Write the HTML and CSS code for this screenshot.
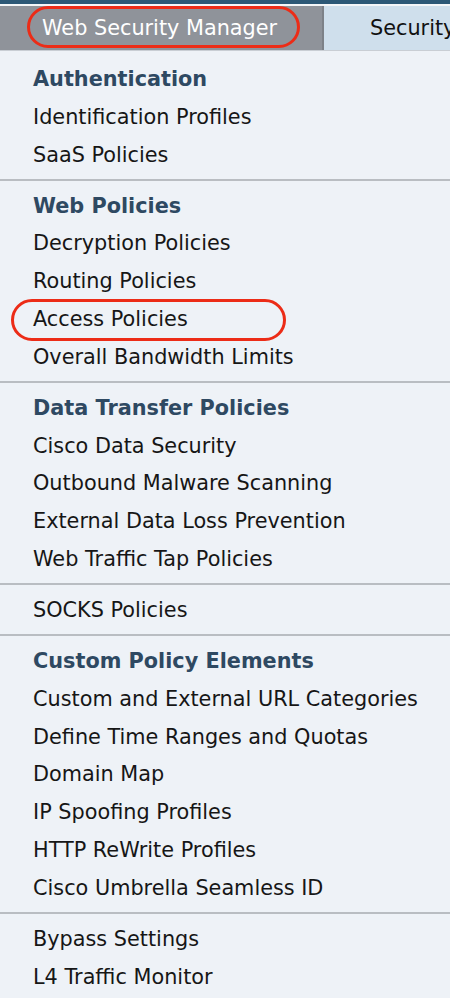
FILE: index.html
```html
<!DOCTYPE html>
<html>
<head>
<meta charset="utf-8">
<link rel="stylesheet" href="styles.css">
</head>
<body>
<div class="page">
  <div class="topstrip"></div>
  <div class="tabs">
    <div class="tab tab-active"><span class="tab-label">Web Security Manager</span><span class="ring ring-tab"></span></div>
    <div class="tab tab-next"><span class="tab-label">Security Services</span></div>
  </div>
  <div class="menu">
    <div class="section">
      <div class="heading">Authentication</div>
      <div class="item">Identification Profiles</div>
      <div class="item">SaaS Policies</div>
    </div>
    <div class="section">
      <div class="heading">Web Policies</div>
      <div class="item">Decryption Policies</div>
      <div class="item">Routing Policies</div>
      <div class="item marked">Access Policies<span class="ring ring-item"></span></div>
      <div class="item">Overall Bandwidth Limits</div>
    </div>
    <div class="section">
      <div class="heading">Data Transfer Policies</div>
      <div class="item">Cisco Data Security</div>
      <div class="item">Outbound Malware Scanning</div>
      <div class="item">External Data Loss Prevention</div>
      <div class="item">Web Traffic Tap Policies</div>
    </div>
    <div class="section">
      <div class="item">SOCKS Policies</div>
    </div>
    <div class="section">
      <div class="heading">Custom Policy Elements</div>
      <div class="item">Custom and External URL Categories</div>
      <div class="item">Define Time Ranges and Quotas</div>
      <div class="item">Domain Map</div>
      <div class="item">IP Spoofing Profiles</div>
      <div class="item">HTTP ReWrite Profiles</div>
      <div class="item">Cisco Umbrella Seamless ID</div>
    </div>
    <div class="section">
      <div class="item">Bypass Settings</div>
      <div class="item">L4 Traffic Monitor</div>
    </div>
  </div>
</div>
</body>
</html>
```
FILE: styles.css
```css
html, body {
  margin: 0;
  padding: 0;
  background: #eef2f7;
}
.page {
  width: 450px;
  height: 998px;
  overflow: hidden;
  font-family: "DejaVu Sans", Verdana, sans-serif;
  font-size: 20.8px;
  color: #161616;
  background: #eef2f7;
}
.topstrip {
  height: 4px;
  background: #2c5876;
  border-bottom: 2px solid #f4f6f8;
}
.tabs {
  display: flex;
  height: 44px;
  border-bottom: 1px solid #c9ced4;
  white-space: nowrap;
  overflow: hidden;
}
.tab {
  position: relative;
  display: flex;
  align-items: center;
  flex: none;
  overflow: hidden;
}
.tab-active {
  width: 322px;
  background: #8f939a;
  color: #fff;
  border-right: 2px solid #7d8188;
  overflow: visible;
}
.tab-active .tab-label {
  padding-left: 42px;
}
.tab-next {
  flex: 1;
  min-width: 0;
  background: #cfdfec;
  color: #111;
}
.tab-next .tab-label {
  padding-left: 46px;
}
.ring {
  position: absolute;
  border: 3px solid #ec2c17;
  border-radius: 22px;
  pointer-events: none;
}
.ring-tab {
  left: 27px;
  top: 0;
  width: 267px;
  height: 36px;
}
.menu {
  padding-top: 3px;
}
.section {
  padding: 7px 0 4px 0;
  border-bottom: 2px solid #b9bdc2;
}
.section:last-child {
  border-bottom: none;
}
.heading, .item {
  position: relative;
  height: 37.85px;
  line-height: 37.85px;
  padding-left: 33px;
  white-space: nowrap;
}
.heading {
  font-weight: bold;
  color: #2e4962;
}
.ring-item {
  left: 11px;
  top: -2px;
  width: 269px;
  height: 36px;
}
```
